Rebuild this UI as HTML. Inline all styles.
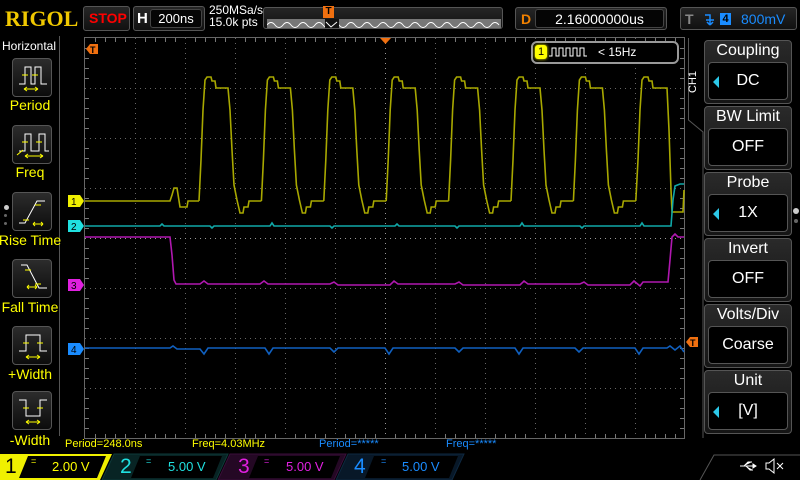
<!DOCTYPE html>
<html><head><meta charset="utf-8"><style>
*{margin:0;padding:0;box-sizing:border-box}
html,body{width:800px;height:480px;overflow:hidden}
body{background:#000;position:relative;font-family:"Liberation Sans",sans-serif;color:#fff}
.a{position:absolute}
.box{position:absolute;border:1px solid #555;border-radius:3px;background:linear-gradient(#262626,#111)}
.inner{position:absolute;border:1px solid #444;border-radius:3px;background:#050505}
.lab{position:absolute;color:#ff0;font-size:14px;text-align:center;width:60px;left:0}
.ib{position:absolute;left:12px;width:40px;height:39px;border:1px solid #555;border-radius:4px;background:linear-gradient(#2c2c2c,#0c0c0c)}
.rb{position:absolute;left:704px;width:88px;height:64px;border:1px solid #555;border-radius:4px;background:linear-gradient(#2a2a2a,#151515)}
.rb .t{position:absolute;top:1px;width:100%;text-align:center;font-size:16px;color:#fff}
.rb .v{position:absolute;left:3px;top:21px;width:80px;height:38px;border:1px solid #555;border-radius:4px;background:#000;text-align:center;line-height:36px;font-size:16px}
.rb .arr{position:absolute;left:4px;top:13px;width:0;height:0;border-top:6px solid transparent;border-bottom:6px solid transparent;border-right:6px solid #2cc8e8}
.st{position:absolute;top:437px;font-size:11px}
.cn{position:absolute;top:456px;font-size:21px;line-height:1}
.cv{position:absolute;top:460px;font-size:13px;line-height:1}
.ce{position:absolute;top:457px;font-size:9px;line-height:1}
</style></head><body>
<div class="a" style="left:5px;top:6px;font-family:'Liberation Serif',serif;font-weight:bold;font-size:22px;color:#f0c800">RIGOL</div>
<div class="box" style="left:83px;top:6px;width:47px;height:25px"><div class="a" style="left:5px;top:3px;color:#f00;font-weight:bold;font-size:14px">STOP</div></div>
<div class="box" style="left:133px;top:6px;width:72px;height:25px"><div class="a" style="left:3px;top:3px;font-weight:bold;font-size:15px">H</div><div class="inner" style="left:16px;top:2px;width:52px;height:19px;font-size:13px;text-align:center;line-height:18px">200ns</div></div>
<div class="a" style="left:209px;top:5px;font-size:12px;line-height:11.5px">250MSa/s<br>15.0k pts</div>
<div class="box" style="left:263px;top:7px;width:240px;height:22px"><div class="a" style="left:3px;top:11px;width:234px;height:9px;background:#777"></div>
<svg class="a" style="left:3px;top:11px" width="234" height="9"><path d="M0 6 Q4 1 8 6 T16 6 T24 6 T32 6 T40 6 T48 6 T56 6 T64 6 T72 6 T80 6 T88 6 T96 6 T104 6 T112 6 T120 6 T128 6 T136 6 T144 6 T152 6 T160 6 T168 6 T176 6 T184 6 T192 6 T200 6 T208 6 T216 6 T224 6 T232 6" stroke="#fff" stroke-width="1" fill="none"/><rect x="58" y="0" width="14" height="9" fill="#111"/><path d="M59 3 L64 8 L70 3" stroke="#fff" fill="none"/></svg>
<div class="a" style="left:59px;top:-2px;width:11px;height:12px;background:#f07010;color:#000;font-size:10px;font-weight:bold;text-align:center;line-height:11px">T</div></div>
<div class="box" style="left:515px;top:7px;width:152px;height:23px"><div class="a" style="left:5px;top:3px;color:#f08000;font-weight:bold;font-size:14px">D</div><div class="inner" style="left:19px;top:1px;width:129px;height:19px;font-size:14px;text-align:center;line-height:18px">2.16000000us</div></div>
<div class="box" style="left:680px;top:7px;width:117px;height:23px"><div class="a" style="left:4px;top:3px;color:#888;font-weight:bold;font-size:14px">T</div>
<svg class="a" style="left:22px;top:4px" width="12" height="15"><path d="M2 3 H7 V13 M7 13 L4 10 M7 13 L10 10 M3 8 H11" stroke="#1a8cff" stroke-width="1.5" fill="none"/></svg>
<div class="a" style="left:39px;top:5px;width:11px;height:12px;background:#1a8cff;color:#000;font-size:11px;text-align:center;line-height:12px;font-weight:bold">4</div>
<div class="a" style="left:60px;top:3px;color:#1a8cff;font-size:14px">800mV</div></div>
<div class="a" style="left:0;top:36px;width:60px;height:400px;border-right:1px solid #555"></div>
<div class="a" style="left:2px;top:39px;font-size:12px">Horizontal</div>
<div class="ib" style="top:58px"><svg width="40" height="39"><path d="M6 25 H12 V8 H18 V25 H22 V8 H28 V25 H34" stroke="#fff" fill="none"/><path d="M9 16h6M19 16h6" stroke="#ff0"/><path d="M11 30h14M11 30l3-2M11 30l3 2M25 30l-3-2M25 30l-3 2" stroke="#ff0"/></svg></div>
<div class="lab" style="top:97px">Period</div>
<div class="ib" style="top:125px"><svg width="40" height="39"><path d="M6 25 H12 V8 H18 V25 H26 V8 H32 V25 H36" stroke="#fff" fill="none"/><path d="M9 16h6M23 16h6" stroke="#ff0"/><path d="M12 30h18M12 30l3-2M12 30l3 2M30 30l-3-2M30 30l-3 2M4 29l6-5" stroke="#ff0"/></svg></div>
<div class="lab" style="top:164px">Freq</div>
<div class="ib" style="top:192px"><svg width="40" height="39"><path d="M6 30 H12 L24 8 H32" stroke="#fff" fill="none"/><path d="M10 27h6M22 12h6M20 31h10M20 31l2-2M20 31l2 2M30 31l-2-2M30 31l-2 2" stroke="#ff0"/></svg></div>
<div class="lab" style="top:232px;left:-2px;width:64px">Rise Time</div>
<div class="a" style="left:4px;top:205px;width:5px;height:5px;border-radius:50%;background:#ccc"></div>
<div class="a" style="left:4px;top:214px;width:3px;height:3px;border-radius:50%;background:#666"></div>
<div class="a" style="left:4px;top:222px;width:3px;height:3px;border-radius:50%;background:#666"></div>
<div class="ib" style="top:259px"><svg width="40" height="39"><path d="M8 5 H14 L26 28 H34" stroke="#fff" fill="none"/><path d="M12 10h6M22 24h6M14 27h10M14 27l2-2M14 27l2 2M24 27l-2-2M24 27l-2 2" stroke="#ff0"/></svg></div>
<div class="lab" style="top:299px;left:-2px;width:64px">Fall Time</div>
<div class="ib" style="top:326px"><svg width="40" height="39"><path d="M6 24 H13 V8 H27 V24 H34" stroke="#fff" fill="none"/><path d="M10 16h6M24 16h6M13 30h14M13 30l3-2M13 30l3 2M27 30l-3-2M27 30l-3 2" stroke="#ff0"/></svg></div>
<div class="lab" style="top:366px">+Width</div>
<div class="ib" style="top:391px"><svg width="40" height="39"><path d="M6 8 H13 V24 H27 V8 H34" stroke="#fff" fill="none"/><path d="M10 16h6M24 16h6M13 30h14M13 30l3-2M13 30l3 2M27 30l-3-2M27 30l-3 2" stroke="#ff0"/></svg></div>
<div class="lab" style="top:432px;line-height:16px">-Width</div>
<svg class="a" style="left:0;top:0" width="800" height="480">
<defs>
<path id="pl" d="M0 201 L2 160 L4 110 L6 80 L8 77 L12 77 L13 81 L16 81 L17 88 L29 88 L31 110 L33 150 L35 185 L38 200 L41 213 L44 213 L45 207 L49 207 L50 201 L62.4 201"/>
</defs>
<rect x="84.5" y="37.5" width="600" height="401" fill="none" stroke="#666"/>
<g stroke="#666" stroke-dasharray="1 4" stroke-width="1">
<path d="M135.5 38V438M185.5 38V438M235.5 38V438M285.5 38V438M335.5 38V438M435.5 38V438M485.5 38V438M535.5 38V438M585.5 38V438M635.5 38V438"/>
<path d="M85 88.5H684M85 138.5H684M85 188.5H684M85 288.5H684M85 338.5H684M85 388.5H684"/>
<path d="M385.5 38V438M85 238.5H684" stroke="#999"/>
</g>
<g stroke="#777" stroke-width="1">
<path d="M95.5 38v4M105.5 38v4M115.5 38v4M125.5 38v4M145.5 38v4M155.5 38v4M165.5 38v4M175.5 38v4M195.5 38v4M205.5 38v4M215.5 38v4M225.5 38v4M245.5 38v4M255.5 38v4M265.5 38v4M275.5 38v4M295.5 38v4M305.5 38v4M315.5 38v4M325.5 38v4M345.5 38v4M355.5 38v4M365.5 38v4M375.5 38v4M395.5 38v4M405.5 38v4M415.5 38v4M425.5 38v4M445.5 38v4M455.5 38v4M465.5 38v4M475.5 38v4M495.5 38v4M505.5 38v4M515.5 38v4M525.5 38v4M545.5 38v4M555.5 38v4M565.5 38v4M575.5 38v4M595.5 38v4M605.5 38v4M615.5 38v4M625.5 38v4M645.5 38v4M655.5 38v4M665.5 38v4M675.5 38v4"/>
<path d="M95.5 434v4M105.5 434v4M115.5 434v4M125.5 434v4M145.5 434v4M155.5 434v4M165.5 434v4M175.5 434v4M195.5 434v4M205.5 434v4M215.5 434v4M225.5 434v4M245.5 434v4M255.5 434v4M265.5 434v4M275.5 434v4M295.5 434v4M305.5 434v4M315.5 434v4M325.5 434v4M345.5 434v4M355.5 434v4M365.5 434v4M375.5 434v4M395.5 434v4M405.5 434v4M415.5 434v4M425.5 434v4M445.5 434v4M455.5 434v4M465.5 434v4M475.5 434v4M495.5 434v4M505.5 434v4M515.5 434v4M525.5 434v4M545.5 434v4M555.5 434v4M565.5 434v4M575.5 434v4M595.5 434v4M605.5 434v4M615.5 434v4M625.5 434v4M645.5 434v4M655.5 434v4M665.5 434v4M675.5 434v4"/>
<path d="M85 48.5h4M85 58.5h4M85 68.5h4M85 78.5h4M85 98.5h4M85 108.5h4M85 118.5h4M85 128.5h4M85 148.5h4M85 158.5h4M85 168.5h4M85 178.5h4M85 198.5h4M85 208.5h4M85 218.5h4M85 228.5h4M85 248.5h4M85 258.5h4M85 268.5h4M85 278.5h4M85 298.5h4M85 308.5h4M85 318.5h4M85 328.5h4M85 348.5h4M85 358.5h4M85 368.5h4M85 378.5h4M85 398.5h4M85 408.5h4M85 418.5h4M85 428.5h4"/>
<path d="M680 48.5h4M680 58.5h4M680 68.5h4M680 78.5h4M680 98.5h4M680 108.5h4M680 118.5h4M680 128.5h4M680 148.5h4M680 158.5h4M680 168.5h4M680 178.5h4M680 198.5h4M680 208.5h4M680 218.5h4M680 228.5h4M680 248.5h4M680 258.5h4M680 268.5h4M680 278.5h4M680 298.5h4M680 308.5h4M680 318.5h4M680 328.5h4M680 348.5h4M680 358.5h4M680 368.5h4M680 378.5h4M680 398.5h4M680 408.5h4M680 418.5h4M680 428.5h4"/>
</g>
<g fill="none" stroke-width="1.6">
<path d="M85 201 H170 L172 195 L174 188 L177 188 L180 207 L187 207 L188 201 L199 201" stroke="#a8a800"/>
<g stroke="#a8a800">
<use href="#pl" x="199"/><use href="#pl" x="261.4"/><use href="#pl" x="323.8"/><use href="#pl" x="386.2"/><use href="#pl" x="448.6"/><use href="#pl" x="511"/><use href="#pl" x="573.4"/>
<path d="M635.8 201 L638 160 L640 110 L642 80 L644 77 L648 77 L649 81 L652 81 L653 88 L667 88 L669 130 L671 190 L672 212 L683 212 L684 190"/>
</g>
<path d="M85 226 H160 L162 224 L164 226 H210 L212 228 L214 226 H270 L272 223 L274 226 H330 L332 228 L334 226 H395 L397 224 L399 226 H455 L457 228 L459 226 H520 L522 223 L524 226 H580 L582 228 L584 226 H640 L642 223 L644 226 H671 L673 200 L675 186 L680 184 H684" stroke="#10a8a8"/>
<path d="M85 237 H170 L172 255 L174 280 L176 284 H200 L204 281 L208 284 H260 L264 281 L268 284 H330 L334 282 L338 285 H390 L394 281 L398 284 H455 L459 282 L463 285 H520 L524 281 L528 284 H580 L584 282 L588 285 H630 L634 281 L640 286 L643 282 H668 L670 260 L672 237 L675 234 L678 237 H684" stroke="#b018b0"/>
<path d="M85 348 H170 L173 346 L177 349 H200 L204 354 L208 348 H265 L269 354 L273 348 H330 L334 352 L338 348 H385 L389 354 L393 348 H455 L459 352 L463 348 H515 L519 354 L523 348 H575 L579 352 L583 348 H635 L639 354 L643 348 H667 L670 346 L675 350 L680 346 L684 352" stroke="#1060c0"/>
</g>
<path d="M86 49 L90 44 H98 V54 H90 Z" fill="#f07010"/><text x="90" y="53" font-size="9" fill="#000" font-family="Liberation Sans" font-weight="bold">T</text>
<path d="M380 38 H391 L385.5 44 Z" fill="#f07010"/>
<path d="M68 195 H80 L84 201 L80 207 H68 Z" fill="#f0f000"/><text x="71" y="205" font-size="10" fill="#000" font-family="Liberation Sans">1</text>
<path d="M68 220 H80 L84 226 L80 232 H68 Z" fill="#20e0e0"/><text x="71" y="230" font-size="10" fill="#000" font-family="Liberation Sans">2</text>
<path d="M68 279 H80 L84 285 L80 291 H68 Z" fill="#e020e0"/><text x="71" y="289" font-size="10" fill="#000" font-family="Liberation Sans">3</text>
<path d="M68 343 H80 L84 349 L80 355 H68 Z" fill="#1a8cff"/><text x="71" y="353" font-size="10" fill="#000" font-family="Liberation Sans">4</text>
<path d="M686 342 L690 337 H698 V347 H690 Z" fill="#f07010"/><text x="690" y="346" font-size="9" fill="#000" font-family="Liberation Sans" font-weight="bold">T</text>
<path d="M688.5 38 V120 L703 132 V438" stroke="#555" fill="none"/>
<path d="M0 454 H112 L100 480 H0 Z" fill="#f0f000"/>
<path d="M28 456 H106 L97 478 H19 Z" fill="#000"/>
<path d="M114 454 H228 L216 480 H102 Z" fill="#082424" stroke="#0e3a3a"/>
<path d="M230 454 H346 L334 480 H218 Z" fill="#240824" stroke="#3a0e3a"/>
<path d="M348 454 H464 L452 480 H336 Z" fill="#081828" stroke="#0e2840"/>
<path d="M140 456 H222 L213 478 H131 Z" fill="#000"/>
<path d="M258 456 H340 L331 478 H249 Z" fill="#000"/>
<path d="M374 456 H458 L449 478 H365 Z" fill="#000"/>
<path d="M700 480 L714 455 H800" stroke="#555" fill="none"/>
<path d="M740 466 H756 M744 466 L748 462 H752 M746 466 L750 470 H753 M756 466 l-3 -2 v4z" stroke="#fff" fill="#fff"/>
<path d="M766 463 H769 L774 459 V473 L769 469 H766 Z" stroke="#fff" fill="none"/>
<path d="M777 463 L783 469 M783 463 L777 469" stroke="#fff"/>
</svg>
<div class="a" style="left:531px;top:41px;width:148px;height:23px;border:2px solid #999;border-radius:6px;background:#000"></div>
<div class="a" style="left:535px;top:45px;width:12px;height:14px;background:#ff0;border-radius:3px;color:#000;font-size:11px;text-align:center;line-height:14px;box-shadow:0 0 3px #ff0">1</div>
<svg class="a" style="left:549px;top:46px" width="46" height="12"><path d="M0 10 H3 V2 H7 V10 H10 V2 H14 V10 H17 V2 H21 V10 H24 V2 H28 V10 H31 V2 H35 V10 H38" stroke="#fff" fill="none"/></svg>
<div class="a" style="left:598px;top:45px;font-size:12px">&lt; 15Hz</div>
<div class="a" style="left:688px;top:93px;font-size:11px;line-height:1;transform:rotate(-90deg);transform-origin:0 0">CH1</div>
<div class="rb" style="top:40px"><div class="t">Coupling</div><div class="v"><div class="arr"></div>DC</div></div>
<div class="rb" style="top:106px"><div class="t">BW Limit</div><div class="v">OFF</div></div>
<div class="rb" style="top:172px"><div class="t">Probe</div><div class="v"><div class="arr"></div>1X</div></div>
<div class="rb" style="top:238px"><div class="t">Invert</div><div class="v">OFF</div></div>
<div class="rb" style="top:304px"><div class="t">Volts/Div</div><div class="v">Coarse</div></div>
<div class="rb" style="top:370px"><div class="t">Unit</div><div class="v"><div class="arr"></div>[V]</div></div>
<div class="a" style="left:793px;top:208px;width:6px;height:6px;border-radius:50%;background:#ccc"></div>
<div class="a" style="left:794px;top:219px;width:4px;height:4px;border-radius:50%;background:#666"></div>
<div class="st" style="left:65px;top:438px;color:#ff0">Period=248.0ns</div>
<div class="st" style="left:192px;top:438px;color:#ff0">Freq=4.03MHz</div>
<div class="st" style="left:319px;top:438px;color:#1a8cff">Period=*****</div>
<div class="st" style="left:446px;top:438px;color:#1a8cff">Freq=*****</div>
<div class="cn" style="left:5px;color:#000">1</div>
<div class="ce" style="left:31px;color:#ff0">=</div>
<div class="cv" style="left:52px;color:#ff0">2.00 V</div>
<div class="cn" style="left:120px;color:#20e0e0">2</div>
<div class="ce" style="left:146px;color:#20e0e0">=</div>
<div class="cv" style="left:168px;color:#20e0e0">5.00 V</div>
<div class="cn" style="left:238px;color:#e020e0">3</div>
<div class="ce" style="left:264px;color:#e020e0">=</div>
<div class="cv" style="left:286px;color:#e020e0">5.00 V</div>
<div class="cn" style="left:354px;color:#1a8cff">4</div>
<div class="ce" style="left:381px;color:#1a8cff">=</div>
<div class="cv" style="left:402px;color:#1a8cff">5.00 V</div>
</body></html>
